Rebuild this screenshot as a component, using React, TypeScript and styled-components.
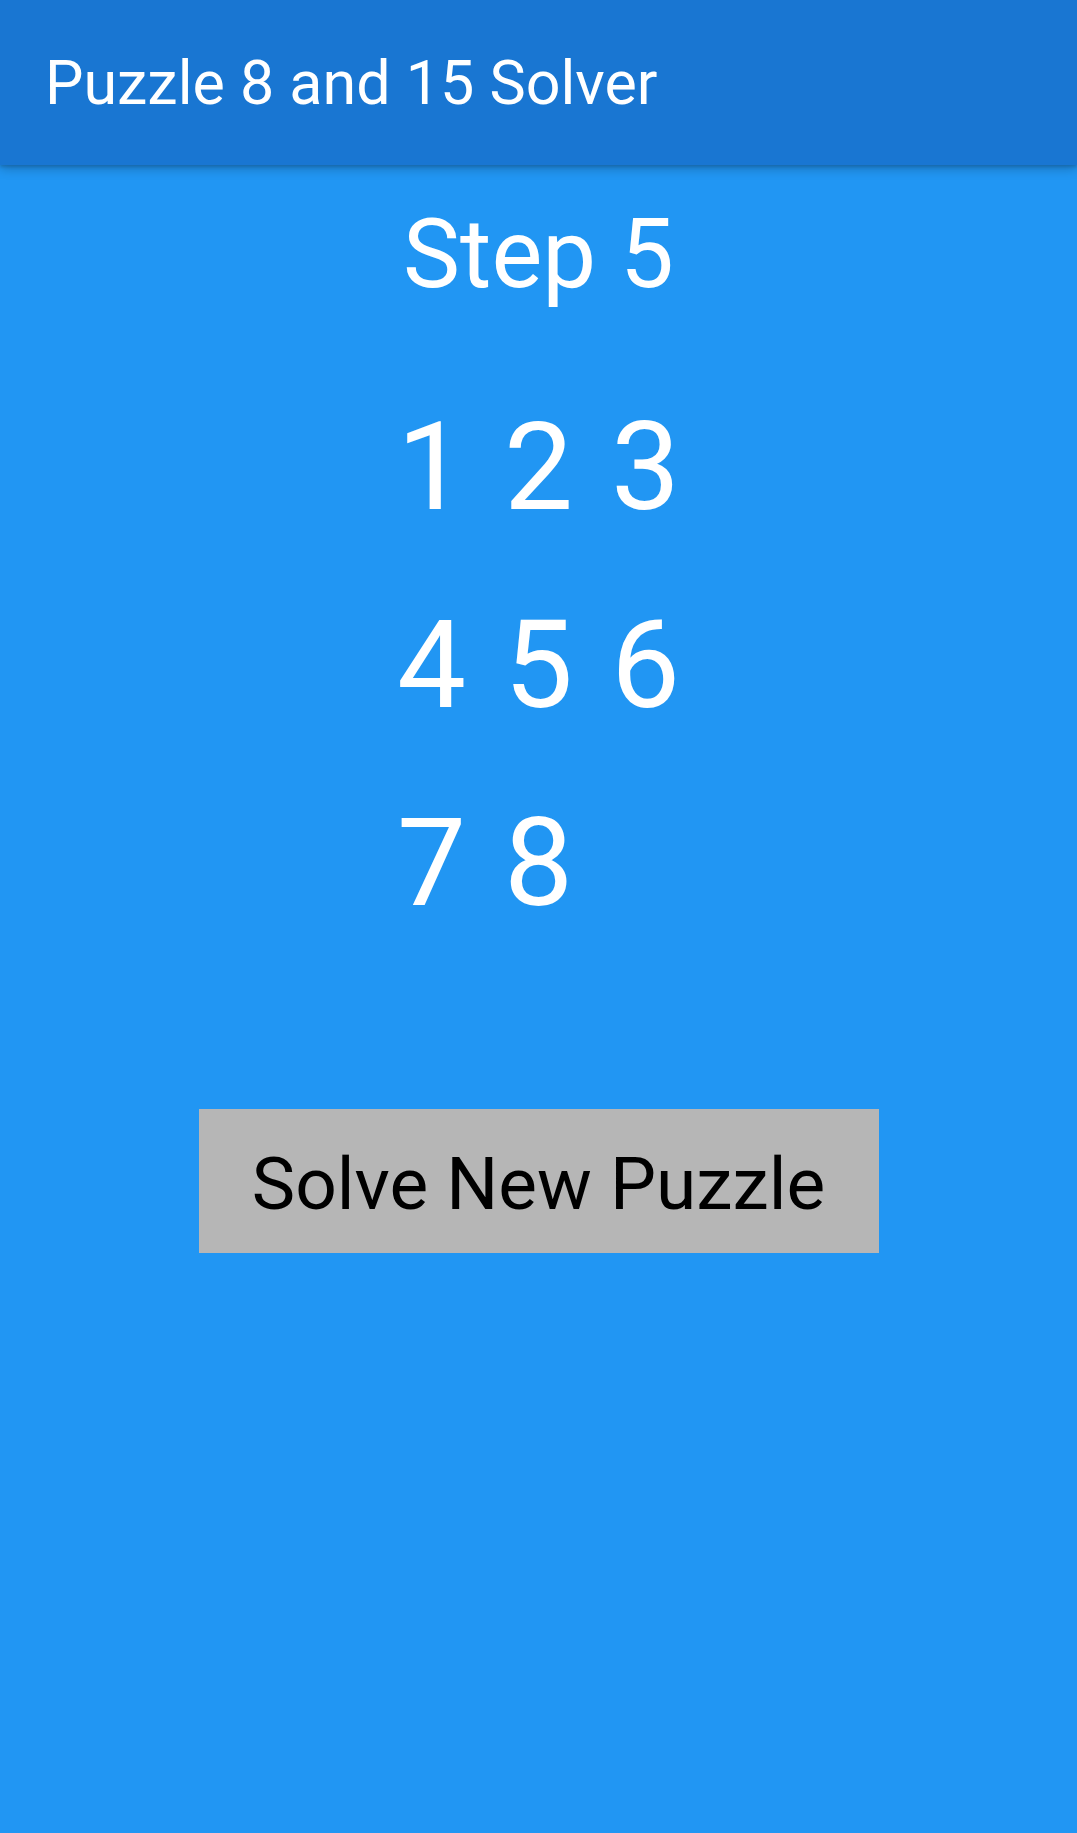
import React from 'react'
import styled, { createGlobalStyle } from 'styled-components'

const GlobalStyle = createGlobalStyle`
  html, body {
    margin: 0;
    padding: 0;
    background: #2196f3;
    font-family: Roboto, "Liberation Sans", sans-serif;
  }
`

const Page = styled.div`
  min-height: 1833px;
  background: #2196f3;
  display: flex;
  flex-direction: column;
  align-items: center;
`

const AppBar = styled.header`
  position: relative;
  z-index: 1;
  align-self: stretch;
  box-sizing: border-box;
  height: 165px;
  padding: 47px 0 0 45px;
  background: #1976d2;
  box-shadow: 0 4px 10px rgba(0, 0, 0, 0.22), 0 2px 3px rgba(0, 0, 0, 0.15);
`

const Title = styled.h1`
  margin: 0;
  font-size: 61px;
  font-weight: 400;
  line-height: normal;
  color: #fff;
`

const StepLabel = styled.div`
  margin-top: 33px;
  font-size: 96px;
  line-height: normal;
  color: #fff;
`

const Board = styled.div`
  margin-top: 58px;
  display: grid;
  grid-template-columns: repeat(3, 107px);
  grid-auto-rows: 198px;
`

const Tile = styled.div`
  font-size: 123px;
  line-height: 198px;
  text-align: center;
  color: #fff;
`

const SolveButton = styled.button`
  margin-top: 147px;
  box-sizing: border-box;
  width: 680px;
  height: 144px;
  padding: 6px 0 0;
  border: none;
  background: #b6b6b6;
  font-family: Roboto, "Liberation Sans", sans-serif;
  font-size: 73px;
  line-height: 138px;
  color: #000;
  cursor: pointer;
`

const tiles = [1, 2, 3, 4, 5, 6, 7, 8, 0]

export default function App() {
  return (
    <>
      <GlobalStyle />
      <Page>
        <AppBar>
          <Title>Puzzle 8 and 15 Solver</Title>
        </AppBar>
        <StepLabel>Step 5</StepLabel>
        <Board>
          {tiles.map((n, i) => (
            <Tile key={i}>{n === 0 ? '' : n}</Tile>
          ))}
        </Board>
        <SolveButton>Solve New Puzzle</SolveButton>
      </Page>
    </>
  )
}
